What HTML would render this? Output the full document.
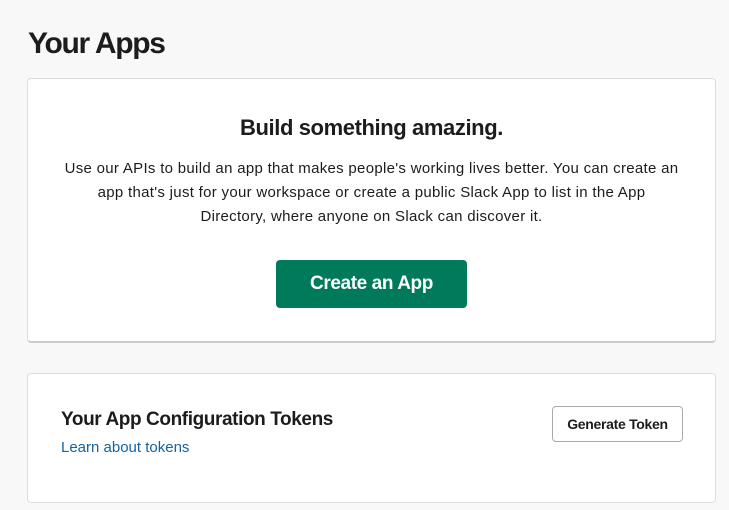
<!DOCTYPE html>
<html><head><style>
body{margin:0;background:#f8f8f8;font-family:"Liberation Sans",sans-serif;color:#1d1c1d;width:729px;height:510px;overflow:hidden;position:relative}
h1{position:absolute;left:28px;top:27px;margin:0;font-size:30px;font-weight:bold;letter-spacing:-1.3px}
.card{position:absolute;left:27px;width:687px;background:#fff;border:1px solid #ddd;border-radius:4px}
.c1{top:78px;height:262px;border-bottom:2px solid #ccc}
.c2{top:373px;height:128px}
.c1 h2{position:absolute;top:36px;left:0;right:0;text-align:center;margin:0;font-size:22px;letter-spacing:-0.4px}
.c1 p{position:absolute;top:78px;left:0;right:0;margin:0;text-align:center;font-size:15px;line-height:24px;letter-spacing:0.3px;white-space:nowrap}
.btn{position:absolute;left:248px;top:181px;width:191px;height:48px;background:#007a5a;color:#fff;border-radius:4px;font-size:19px;font-weight:bold;text-align:center;line-height:48px;letter-spacing:-0.4px}
.c2 h3{position:absolute;left:33px;top:35px;margin:0;font-size:19px;letter-spacing:-0.4px}
.c2 a{position:absolute;left:33px;top:65px;font-size:15px;color:#1264a3;text-decoration:none}
.gen{position:absolute;left:524px;top:32px;width:129px;height:34px;border:1px solid #aaa;border-radius:4px;font-size:14px;font-weight:bold;text-align:center;line-height:34px;letter-spacing:-0.3px}
</style></head><body>
<h1>Your Apps</h1>
<div class="card c1">
<h2>Build something amazing.</h2>
<p>Use our APIs to build an app that makes people's working lives better. You can create an<br>app that's just for your workspace or create a public Slack App to list in the App<br>Directory, where anyone on Slack can discover it.</p>
<div class="btn">Create an App</div>
</div>
<div class="card c2">
<h3>Your App Configuration Tokens</h3>
<a href="#">Learn about tokens</a>
<div class="gen">Generate Token</div>
</div>
</body></html>
